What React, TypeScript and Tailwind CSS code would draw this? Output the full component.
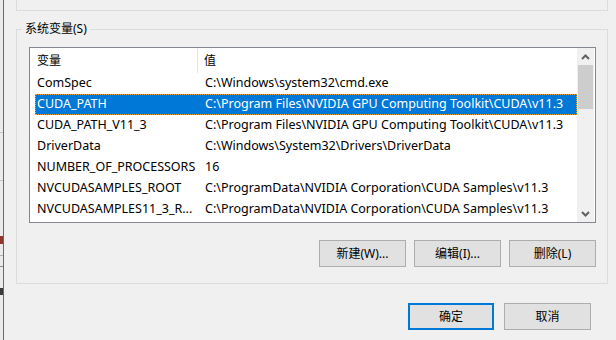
import React from "react";

const FONT = { fontFamily: '"Noto Sans", "Noto Sans CJK SC", sans-serif' };

const ROWS: [string, string][] = [
  ["ComSpec", "C:\\Windows\\system32\\cmd.exe"],
  ["CUDA_PATH", "C:\\Program Files\\NVIDIA GPU Computing Toolkit\\CUDA\\v11.3"],
  ["CUDA_PATH_V11_3", "C:\\Program Files\\NVIDIA GPU Computing Toolkit\\CUDA\\v11.3"],
  ["DriverData", "C:\\Windows\\System32\\Drivers\\DriverData"],
  ["NUMBER_OF_PROCESSORS", "16"],
  ["NVCUDASAMPLES_ROOT", "C:\\ProgramData\\NVIDIA Corporation\\CUDA Samples\\v11.3"],
  ["NVCUDASAMPLES11_3_R...", "C:\\ProgramData\\NVIDIA Corporation\\CUDA Samples\\v11.3"],
];

const SELECTED = 1;

function Chevron({ up }: { up?: boolean }) {
  return (
    <svg width="9" height="6" viewBox="0 0 9 6">
      <path
        d={up ? "M1 5 L4.5 1.5 L8 5" : "M1 1 L4.5 4.5 L8 1"}
        fill="none"
        stroke="#606060"
        strokeWidth="2"
      />
    </svg>
  );
}

function Btn({ label, focused }: { label: string; focused?: boolean }) {
  return (
    <button
      type="button"
      className={`flex h-[27px] items-center justify-center bg-[#e1e1e1] text-[12px] text-black ${
        focused ? "w-[86px] border-2 border-[#0078d7]" : "w-[87px] border border-[#adadad]"
      }`}
    >
      {label}
    </button>
  );
}

export default function App() {
  return (
    <div className="flex h-[340px] w-[616px] overflow-hidden bg-[#f0f0f0] text-black" style={FONT}>
      {/* sliver of the window behind */}
      <div className="relative w-[4px] shrink-0 border-r border-[#6a6a6a] bg-[#ebebeb]">
        <div className="absolute left-0 top-[132px] h-px w-[3px] bg-[#c8c8c8]" />
        <div className="absolute left-0 top-[180px] h-px w-[3px] bg-[#c8c8c8]" />
        <div className="absolute left-0 top-[236px] h-[8px] w-[3px] bg-[#8a3a2a]" />
        <div className="absolute left-0 top-[255px] h-px w-[3px] bg-[#b0b0b0]" />
        <div className="absolute left-0 top-[266px] h-px w-[3px] bg-[#8a8a8a]" />
        <div className="absolute left-0 top-[288px] h-[7px] w-[3px] bg-[#3a3a3a]" />
      </div>

      <div className="flex flex-1 flex-col">
        {/* bottom edge of the user variables group */}
        <div className="ml-[12px] h-[11px] w-[592px] border-x border-b border-[#dcdcdc]" />

        {/* system variables group */}
        <div className="relative ml-[12px] mt-[18px] flex h-[255px] w-[592px] flex-col border border-[#dcdcdc] pl-[12px] pr-[11px] pt-[17px]">
          <span className="absolute left-[5px] top-[-10px] bg-[#f0f0f0] px-[3px] text-[12px] leading-[18px]">
            系统变量(S)
          </span>

          {/* list view */}
          <div className="flex h-[176px] w-[567px] border border-[#828790] bg-white">
            <div className="flex w-[547px] flex-col overflow-hidden">
              <div className="flex h-[25px] shrink-0 items-center text-[12px]">
                <div className="flex h-full w-[168px] items-center border-r border-[#e5e5e5] pl-[7px]">变量</div>
                <div className="pl-[6px]">值</div>
              </div>
              {ROWS.map(([name, value], i) => (
                <div
                  key={name}
                  className={`ml-[5px] flex h-[21px] shrink-0 items-center whitespace-nowrap text-[12.5px] ${
                    i === SELECTED
                      ? "border border-dotted border-[#f0a53c] bg-[#0078d7] text-white"
                      : "border border-transparent"
                  }`}
                >
                  <div className="w-[169px] pl-[1px]">{name}</div>
                  <div>{value}</div>
                </div>
              ))}
            </div>

            {/* scrollbar */}
            <div className="flex w-[17px] flex-col bg-[#f0f0f0]">
              <div className="flex h-[17px] items-center justify-center">
                <Chevron up />
              </div>
              <div className="mx-[1px] h-[44px] bg-[#cdcdcd]" />
              <div className="flex-1" />
              <div className="flex h-[17px] items-center justify-center">
                <Chevron />
              </div>
            </div>
          </div>

          <div className="mt-[17px] flex w-[567px] justify-end gap-[8px]">
            <Btn label="新建(W)..." />
            <Btn label="编辑(I)..." />
            <Btn label="删除(L)" />
          </div>
        </div>

        <div className="ml-[404px] mt-[19px] flex gap-[10px]">
          <Btn label="确定" focused />
          <Btn label="取消" />
        </div>
      </div>
    </div>
  );
}
